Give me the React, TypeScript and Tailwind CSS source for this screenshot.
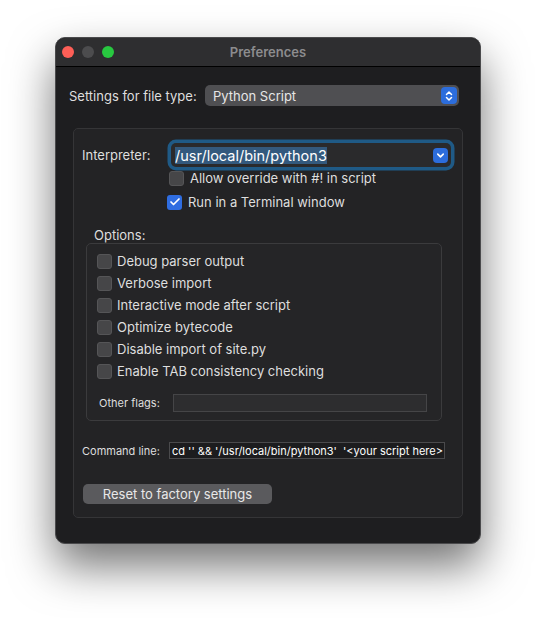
import { Check, ChevronDown, ChevronsUpDown } from "lucide-react";

const options = [
  "Debug parser output",
  "Verbose import",
  "Interactive mode after script",
  "Optimize bytecode",
  "Disable import of site.py",
  "Enable TAB consistency checking",
];

function Box({ checked = false }: { checked?: boolean }) {
  return checked ? (
    <span className="flex h-[15px] w-[15px] shrink-0 items-center justify-center rounded-[3px] bg-[#2f6de1]">
      <Check className="h-[12px] w-[12px] text-white" strokeWidth={3.5} />
    </span>
  ) : (
    <span className="h-[15px] w-[15px] shrink-0 rounded-[3px] border border-[#555557] bg-[#464648]" />
  );
}

export default function App() {
  return (
    <div
      className="h-[618px] w-[537px] bg-white pl-[55px] pt-[37px] text-[13px] leading-[16px] text-[#dedede]"
      style={{ fontFamily: "Inter, 'Noto Sans', sans-serif" }}
    >
      <div className="flex h-[507px] w-[426px] flex-col overflow-hidden rounded-[10px] border border-[#4a4a4c] bg-[#1e1e20] shadow-[0_22px_45px_rgba(0,0,0,0.55)]">
        {/* title bar */}
        <div className="relative flex h-[29px] shrink-0 items-center border-b border-black bg-[#2e2e30] pl-[6px]">
          <div className="flex gap-[8px]">
            <span className="h-[12px] w-[12px] rounded-full bg-[#fe5f57]" />
            <span className="h-[12px] w-[12px] rounded-full bg-[#4c4c4e]" />
            <span className="h-[12px] w-[12px] rounded-full bg-[#28c840]" />
          </div>
          <span className="absolute inset-x-0 text-center text-[13px] font-semibold text-[#8c8c8e]">Preferences</span>
        </div>

        {/* file type */}
        <div className="mt-[18px] flex items-center pl-[13px] pr-[21px]">
          <span className="w-[136px]">Settings for file type:</span>
          <div className="flex h-[21px] flex-1 items-center justify-between rounded-[5px] bg-[#4f4f52] pl-[8px] pr-[2px] text-[#e6e6e6]">
            <span>Python Script</span>
            <span className="flex h-[17px] w-[16px] items-center justify-center rounded-[4px] bg-[#2c6ddc]">
              <ChevronsUpDown className="h-[12px] w-[12px] text-white" strokeWidth={3} />
            </span>
          </div>
        </div>

        {/* main group */}
        <div className="ml-[17px] mt-[22px] flex h-[390px] w-[390px] flex-col rounded-[5px] border border-[#353537] bg-[#232325] pl-[8px] pr-[11px]">
          <div className="mt-[14px] flex items-center">
            <span className="w-[89px]">Interpreter:</span>
            <div className="flex h-[24px] flex-1 items-center justify-between rounded-[5px] bg-[#2a2a2c] pl-[4px] pr-[3px] ring-[3.5px] ring-[#1f5a86]">
              <span className="bg-[#33597d] text-[14.5px] leading-[17px] text-white">/usr/local/bin/python3</span>
              <span className="flex h-[15px] w-[15px] items-center justify-center rounded-[4px] bg-[#2c6ddc]">
                <ChevronDown className="h-[11px] w-[11px] text-white" strokeWidth={3.5} />
              </span>
            </div>
          </div>

          <div className="ml-[85px] mt-[3px] flex flex-col gap-[8px]">
            <label className="flex h-[16px] items-center gap-[6px] pl-[2px]">
              <Box />
              <span>Allow override with #! in script</span>
            </label>
            <label className="flex h-[16px] items-center gap-[6px]">
              <Box checked />
              <span>Run in a Terminal window</span>
            </label>
          </div>

          <span className="ml-[12px] mt-[17px]">Options:</span>
          <div className="ml-[4px] flex w-[356px] flex-col rounded-[5px] border border-[#3b3b3d] bg-[#252527] pb-[8px] pl-[10px] pr-[14px] pt-[9px]">
            <div className="flex flex-col gap-[6px]">
              {options.map((o) => (
                <label key={o} className="flex h-[16px] items-center gap-[5px]">
                  <Box />
                  <span>{o}</span>
                </label>
              ))}
            </div>
            <div className="mt-[15px] flex items-center">
              <span className="w-[76px] pl-[2px] text-[11px]">Other flags:</span>
              <div className="h-[18px] flex-1 border border-[#454547] bg-[#2d2d2f]" />
            </div>
          </div>

          <div className="mt-[21px] flex items-center">
            <span className="w-[87px] text-[11px]">Command line:</span>
            <div className="flex h-[17px] w-[276px] items-center overflow-hidden whitespace-nowrap border border-[#4a4a4c] bg-[#1c1c1e] pl-[2px] text-[11px] text-white">
              cd '' &amp;&amp; '/usr/local/bin/python3'&nbsp; '&lt;your script here&gt;
            </div>
          </div>

          <button className="ml-[1px] mt-[25px] h-[20px] w-[189px] rounded-[5px] bg-[#5a5a5d] text-center text-[13px] text-[#e8e8e8]">
            Reset to factory settings
          </button>
        </div>
      </div>
    </div>
  );
}
